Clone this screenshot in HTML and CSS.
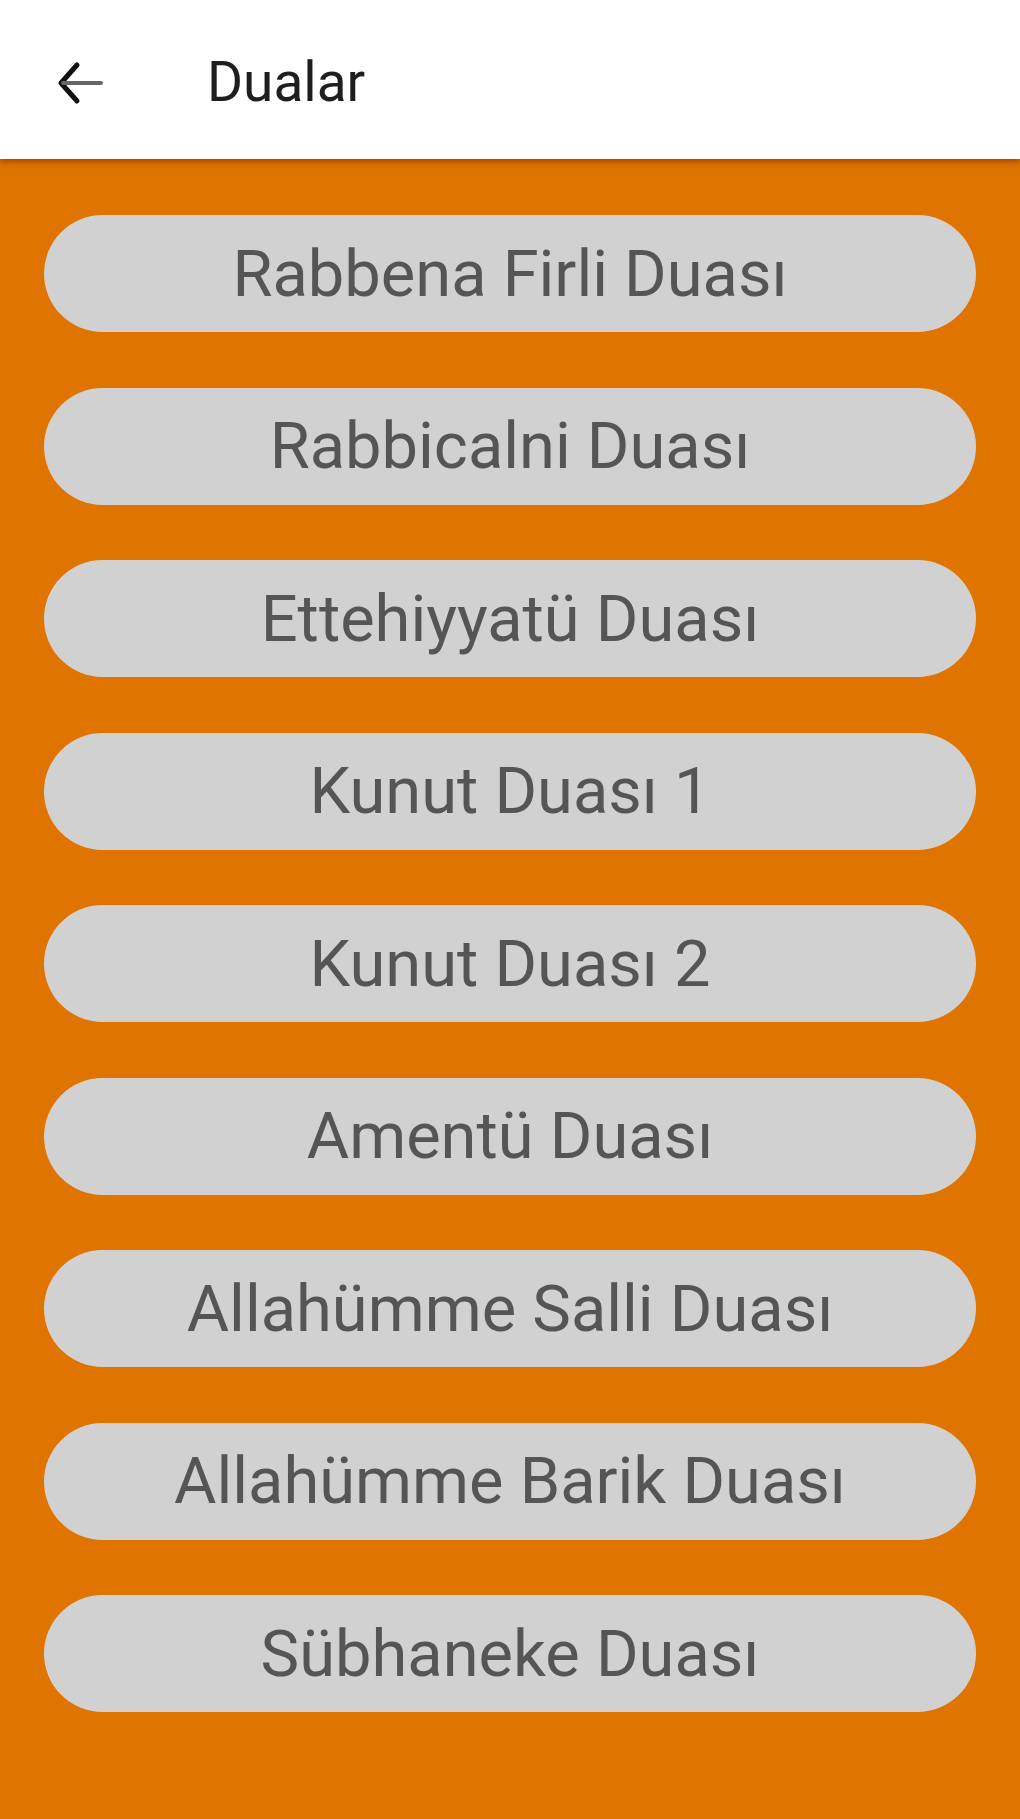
FILE: index.html
```html
<!DOCTYPE html>
<html lang="tr">
<head>
    <meta charset="UTF-8">
    <meta name="viewport" content="width=device-width, initial-scale=1.0">
    <title>Dualar</title>
    <link rel="stylesheet" href="styles.css">
</head>
<body>
    <!-- Barra superior -->
    <header class="toolbar">
        <button class="back" aria-label="Geri">
            <svg width="50" height="50" viewBox="0 0 50 50">
                <polyline points="21,4 5,22 21,40" fill="none" stroke="#111" stroke-width="5" stroke-linecap="round" stroke-linejoin="round"/>
                <line x1="7" y1="22" x2="45" y2="22" stroke="#666" stroke-width="4" stroke-linecap="round"/>
            </svg>
        </button>
        <h1 class="title">Dualar</h1>
    </header>

    <!-- Lista de dualar -->
    <main class="list">
        <button class="dua">Rabbena Firli Duası</button>
        <button class="dua">Rabbicalni Duası</button>
        <button class="dua">Ettehiyyatü Duası</button>
        <button class="dua">Kunut Duası 1</button>
        <button class="dua">Kunut Duası 2</button>
        <button class="dua">Amentü Duası</button>
        <button class="dua">Allahümme Salli Duası</button>
        <button class="dua">Allahümme Barik Duası</button>
        <button class="dua">Sübhaneke Duası</button>
    </main>
</body>
</html>
```

FILE: styles.css
```css
body {
    margin: 0;
    padding: 0;
    font-family: Roboto, 'Liberation Sans', sans-serif;
    background-color: #e07400; /* Naranja */
    min-height: 100vh;
}
.toolbar {
    height: 159px;
    background-color: #fff;
    display: flex;
    align-items: center;
    box-shadow: 0 3px 6px rgba(120, 40, 0, 0.55); /* Sombra */
    position: relative;
}
.back {
    width: 66px;
    height: 66px;
    margin-left: 43px;
    padding: 0;
    border: none;
    background: none;
    display: flex;
    align-items: center;
    justify-content: center;
}
.back svg {
    margin-top: 12px;
    margin-left: 10px;
}
.title {
    margin: 0 0 0 98px;
    font-size: 55px;
    font-weight: 400;
    color: #1e1e1e;
    padding-top: 4px;
}
.list {
    display: flex;
    flex-direction: column;
    gap: 55.5px;
    padding: 56px 44px 40px;
}
.dua {
    height: 117px;
    border: none;
    border-radius: 59px;
    background-color: #d1d1d1;
    color: #555;
    font-family: Roboto, 'Liberation Sans', sans-serif;
    font-size: 65px;
    padding: 0;
    cursor: pointer;
}
```
